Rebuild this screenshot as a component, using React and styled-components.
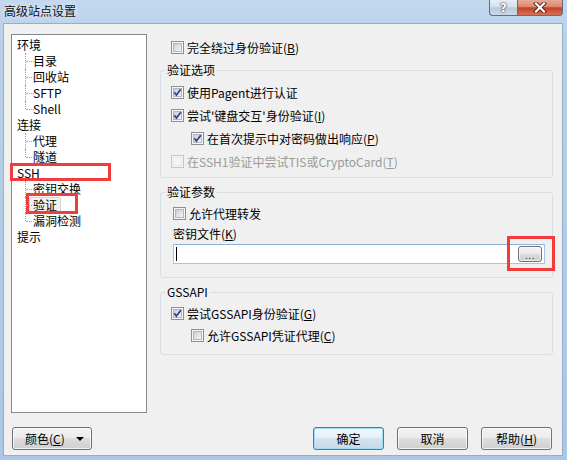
import React from 'react';
import styled, { createGlobalStyle, css } from 'styled-components';

const GlobalStyle = createGlobalStyle`
  html, body {
    margin: 0;
    padding: 0;
  }
  body {
    width: 567px;
    height: 460px;
    overflow: hidden;
    background: #b9d1ea;
    font-family: "Noto Sans CJK SC", "Liberation Sans", sans-serif;
    font-size: 12px;
    color: #000;
  }
`;

const Window = styled.div`
  width: 567px;
  height: 460px;
  display: flex;
  flex-direction: column;
  background: linear-gradient(180deg, #c3d8ef 0%, #b8d0ea 40px, #aac7e6 100%);
`;

const TitleBar = styled.div`
  height: 23px;
  flex: none;
  display: flex;
  justify-content: space-between;
  align-items: flex-start;
  padding-left: 4px;
`;

const Title = styled.div`
  line-height: 22px;
  font-size: 12px;
  color: #111;
  text-shadow: 0 0 6px rgba(255, 255, 255, 0.9);
`;

const Caption = styled.div`
  display: flex;
  margin-right: 4px;
`;

const CaptionBtn = styled.div`
  height: 16px;
  box-sizing: border-box;
  display: flex;
  align-items: center;
  justify-content: center;
  border: 1px solid #5f6f82;
  border-top: none;
  ${p => p.$close ? css`
    width: 46px;
    border-radius: 0 0 4px 0;
    background: linear-gradient(180deg, #e9aa98 0%, #da8672 45%, #c3431f 52%, #d6715a 100%);
  ` : css`
    width: 28px;
    border-right: none;
    border-radius: 0 0 0 4px;
    background: linear-gradient(180deg, #e6eef6 0%, #d5e0ec 45%, #b9cadc 52%, #cbd9e8 100%);
    font-family: "DejaVu Sans", sans-serif;
    font-weight: bold;
    font-size: 12px;
    line-height: 14px;
    color: #fff;
    text-shadow: 0 0 1px #333, 0 0 2px #333;
  `}
`;

const CloseGlyph = () => (
  <svg width="14" height="11" viewBox="0 0 14 11">
    <path d="M3 1.5 L11 9.5 M11 1.5 L3 9.5" stroke="#5a2416" strokeWidth="4" strokeLinecap="square" />
    <path d="M3 1.5 L11 9.5 M11 1.5 L3 9.5" stroke="#fff" strokeWidth="2.2" strokeLinecap="square" />
  </svg>
);

const Client = styled.div`
  flex: 1;
  margin: 0 4px 4px 3px;
  border: 1px solid #99aec4;
  background: #f0f0f0;
  padding: 10px 9px 0 7px;
  display: flex;
  flex-direction: column;
`;

const Main = styled.div`
  display: flex;
  gap: 13px;
  height: 379px;
`;

/* ---- tree ---- */

const Tree = styled.div`
  width: 136px;
  box-sizing: border-box;
  border: 1px solid #828790;
  background: #fff;
  padding: 2px 0 0 1px;
`;

const TreeRow = styled.div`
  position: relative;
  height: 16px;
  white-space: nowrap;
  padding-left: ${p => (p.$child ? 16 : 0)}px;

  ${p => p.$child && css`
    &::before {
      content: '';
      position: absolute;
      left: 12px;
      top: 0;
      height: ${p.$last ? 8 : 16}px;
      border-left: 1px dotted #a0a0a0;
    }
    &::after {
      content: '';
      position: absolute;
      left: 13px;
      top: 8px;
      width: 8px;
      border-top: 1px dotted #a0a0a0;
    }
  `}
`;

const TreeLabel = styled.span`
  display: inline-block;
  vertical-align: top;
  height: 14px;
  line-height: 14px;
  padding: 0 3px;
  border: 1px solid ${p => (p.$selected ? '#d6d6d6' : 'transparent')};
  border-radius: 2px;
  background: ${p => (p.$selected ? '#f2f2f2' : 'transparent')};
`;

const Annot = styled.span`
  position: absolute;
  left: ${p => p.$l}px;
  top: ${p => p.$t}px;
  width: ${p => p.$w}px;
  height: ${p => p.$h}px;
  box-sizing: border-box;
  border: 3px solid #f23b3b;
  pointer-events: none;
`;

const treeData = [
  { label: '环境', children: [{ label: '目录' }, { label: '回收站' }, { label: 'SFTP' }, { label: 'Shell' }] },
  { label: '连接', children: [{ label: '代理' }, { label: '隧道' }] },
  {
    label: 'SSH',
    mark: { l: -3, t: -2, w: 101, h: 18 },
    children: [
      { label: '密钥交换' },
      { label: '验证', selected: true, mark: { l: 13, t: -4, w: 52, h: 21 } },
      { label: '漏洞检测' },
    ],
  },
  { label: '提示' },
];

const TreeView = () => (
  <Tree>
    {treeData.map(node => (
      <React.Fragment key={node.label}>
        <TreeRow>
          <TreeLabel>{node.label}</TreeLabel>
          {node.mark && <Annot $l={node.mark.l} $t={node.mark.t} $w={node.mark.w} $h={node.mark.h} />}
        </TreeRow>
        {(node.children || []).map((c, i, arr) => (
          <TreeRow key={c.label} $child $last={i === arr.length - 1}>
            <TreeLabel $selected={c.selected}>{c.label}</TreeLabel>
            {c.mark && <Annot $l={c.mark.l} $t={c.mark.t} $w={c.mark.w} $h={c.mark.h} />}
          </TreeRow>
        ))}
      </React.Fragment>
    ))}
  </Tree>
);

/* ---- right pane ---- */

const Pane = styled.div`
  width: 393px;
  display: flex;
  flex-direction: column;
`;

const Row = styled.div`
  display: flex;
  align-items: center;
  height: 16px;
  gap: 3px;
  padding-left: ${p => p.$indent || 0}px;
  margin-top: ${p => p.$mt || 0}px;
  color: ${p => (p.$disabled ? '#9a9a9a' : '#000')};
  white-space: nowrap;
`;

const Box = styled.span`
  position: relative;
  flex: none;
  width: 13px;
  height: 13px;
  box-sizing: border-box;
  border: 1px solid ${p => (p.$disabled ? '#c4c4c4' : '#8e8f8f')};
  background: #f6f6f6;

  &::before {
    content: '';
    position: absolute;
    inset: 1px;
    border: 1px solid ${p => (p.$disabled ? '#e6e6e6' : '#b3b7bc')};
    background: ${p => (p.$disabled
      ? '#f4f4f4'
      : 'linear-gradient(135deg, #c9cdd3 0%, #e4e6e9 60%, #f7f7f7 100%)')};
  }

  svg {
    position: absolute;
    left: 0;
    top: 0;
  }
`;

const Key = styled.span`
  text-decoration: underline;
  text-underline-offset: 1px;
`;

const Check = ({ checked, disabled, indent, mt, children }) => (
  <Row $indent={indent} $mt={mt} $disabled={disabled}>
    <Box $disabled={disabled}>
      {checked && (
        <svg width="11" height="11" viewBox="0 0 11 11">
          <path d="M2.3 5.3 L4.4 8 L8.8 2.2" fill="none" stroke="#34449a" strokeWidth="1.8" />
        </svg>
      )}
    </Box>
    <span>{children}</span>
  </Row>
);

const Group = styled.fieldset`
  margin: ${p => p.$mt}px 0 0 0;
  padding: 0;
  min-width: 0;
  border: 1px solid #d5dfe5;
  border-radius: 3px;
`;

const Legend = styled.legend`
  margin-left: 4px;
  padding: 0 2px;
  line-height: 14px;
  font-size: 12px;
`;

const GroupBody = styled.div`
  display: flex;
  flex-direction: column;
  gap: ${p => p.$gap || 0}px;
  padding: ${p => p.$pad};
`;

const FieldLabel = styled.div`
  height: 16px;
  line-height: 16px;
  margin-top: 5px;
`;

const FileInput = styled.div`
  position: relative;
  margin-top: 2px;
  width: 372px;
  height: 20px;
  box-sizing: border-box;
  border: 1px solid #a6c3e0;
  border-top-color: #8fb1d6;
  background: #fff;
  display: flex;
  align-items: center;
  justify-content: space-between;
  padding: 0 2px 0 2px;
`;

const Caret = styled.span`
  width: 1px;
  height: 14px;
  background: #000;
`;

const Browse = styled.div`
  width: 24px;
  height: 16px;
  box-sizing: border-box;
  border: 1px solid #707070;
  border-radius: 3px;
  background: linear-gradient(180deg, #f4f4f4 0%, #ebebeb 50%, #dcdcdc 50%, #cfcfcf 100%);
  box-shadow: inset 0 0 0 1px rgba(255, 255, 255, 0.6);
  display: flex;
  justify-content: center;
  align-items: flex-end;
  font-size: 10px;
  line-height: 12px;
  color: #1d2c70;
  letter-spacing: 0.5px;
`;

/* ---- footer ---- */

const Footer = styled.div`
  display: flex;
  align-items: center;
  margin-top: 14px;
  padding: 0 1px;
  gap: 13px;
`;

const Button = styled.div`
  width: ${p => p.$w || 71}px;
  height: 23px;
  box-sizing: border-box;
  border: 1px solid ${p => (p.$default ? '#3c7fb1' : '#707070')};
  border-radius: 3px;
  background: ${p => (p.$default
    ? 'linear-gradient(180deg, #f2f7fb 0%, #e6eff7 50%, #d4e3ef 50%, #c6d9e9 100%)'
    : 'linear-gradient(180deg, #f2f2f2 0%, #ebebeb 50%, #dddddd 50%, #cfcfcf 100%)')};
  box-shadow: inset 0 0 0 1px ${p => (p.$default ? '#9fdcf6' : 'rgba(255,255,255,0.7)')};
  display: flex;
  align-items: center;
  justify-content: center;
  line-height: 16px;
  ${p => p.$first && css`
    margin-right: auto;
    justify-content: space-between;
    padding: 0 7px 0 12px;
  `}
`;

const Triangle = styled.span`
  width: 0;
  height: 0;
  border-left: 4px solid transparent;
  border-right: 4px solid transparent;
  border-top: 4px solid #000;
`;

export default function App() {
  return (
    <>
      <GlobalStyle />
      <Window>
        <TitleBar>
          <Title>高级站点设置</Title>
          <Caption>
            <CaptionBtn>?</CaptionBtn>
            <CaptionBtn $close><CloseGlyph /></CaptionBtn>
          </Caption>
        </TitleBar>
        <Client>
          <Main>
            <TreeView />
            <Pane>
              <Check indent={11} mt={5}>完全绕过身份验证(<Key>B</Key>)</Check>

              <Group $mt={8}>
                <Legend>验证选项</Legend>
                <GroupBody $gap={7} $pad="7px 9px 8px 10px">
                  <Check checked>使用Pagent进行认证</Check>
                  <Check checked>尝试'键盘交互'身份验证(<Key>I</Key>)</Check>
                  <Check checked indent={20}>在首次提示中对密码做出响应(<Key>P</Key>)</Check>
                  <Check disabled>在SSH1验证中尝试TIS或CryptoCard(<Key>T</Key>)</Check>
                </GroupBody>
              </Group>

              <Group $mt={7}>
                <Legend>验证参数</Legend>
                <GroupBody $pad="6px 9px 13px 12px">
                  <Check>允许代理转发</Check>
                  <FieldLabel>密钥文件(<Key>K</Key>)</FieldLabel>
                  <FileInput>
                    <Caret />
                    <Browse>...</Browse>
                    <Annot $l={333} $t={-9} $w={48} $h={35} />
                  </FileInput>
                </GroupBody>
              </Group>

              <Group $mt={7}>
                <Legend>GSSAPI</Legend>
                <GroupBody $gap={6} $pad="6px 9px 11px 10px">
                  <Check checked>尝试GSSAPI身份验证(<Key>G</Key>)</Check>
                  <Check indent={20}>允许GSSAPI凭证代理(<Key>C</Key>)</Check>
                </GroupBody>
              </Group>
            </Pane>
          </Main>

          <Footer>
            <Button $first $w={80}>
              <span>颜色(<Key>C</Key>)</span>
              <Triangle />
            </Button>
            <Button $default>确定</Button>
            <Button>取消</Button>
            <Button>帮助(<Key>H</Key>)</Button>
          </Footer>
        </Client>
      </Window>
    </>
  );
}
